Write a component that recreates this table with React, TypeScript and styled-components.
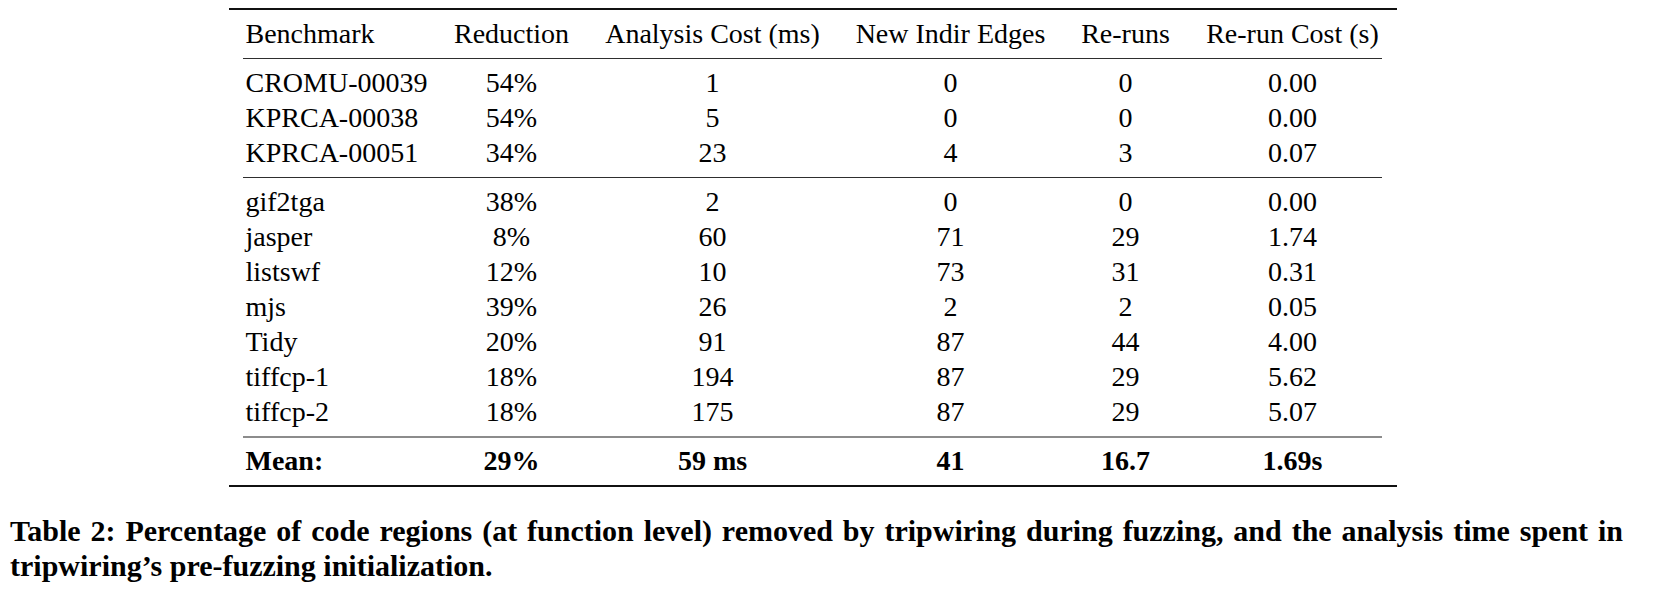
import React from 'react';
import styled, { createGlobalStyle } from 'styled-components';

const GlobalStyle = createGlobalStyle`
  html, body {
    margin: 0;
    padding: 0;
    background: #ffffff;
  }
  body {
    font-family: 'Liberation Serif', 'Times New Roman', serif;
    color: #000000;
  }
`;

const columns = [
  { key: 'name', label: 'Benchmark', width: 207 },
  { key: 'reduction', label: 'Reduction', width: 151 },
  { key: 'cost', label: 'Analysis Cost (ms)', width: 251 },
  { key: 'edges', label: 'New Indir Edges', width: 225 },
  { key: 'reruns', label: 'Re-runs', width: 125 },
  { key: 'rerunCost', label: 'Re-run Cost (s)', width: 209 },
];

type Row = [string, string, string, string, string, string];

const cgcRows: Row[] = [
  ['CROMU-00039', '54%', '1', '0', '0', '0.00'],
  ['KPRCA-00038', '54%', '5', '0', '0', '0.00'],
  ['KPRCA-00051', '34%', '23', '4', '3', '0.07'],
];

const realRows: Row[] = [
  ['gif2tga', '38%', '2', '0', '0', '0.00'],
  ['jasper', '8%', '60', '71', '29', '1.74'],
  ['listswf', '12%', '10', '73', '31', '0.31'],
  ['mjs', '39%', '26', '2', '2', '0.05'],
  ['Tidy', '20%', '91', '87', '44', '4.00'],
  ['tiffcp-1', '18%', '194', '87', '29', '5.62'],
  ['tiffcp-2', '18%', '175', '87', '29', '5.07'],
];

const meanRow: Row = ['Mean:', '29%', '59 ms', '41', '16.7', '1.69s'];

const Page = styled.div`
  width: 1656px;
  padding-top: 8px;
`;

const Figure = styled.figure`
  margin: 0;
  width: 1626px;
`;

const Table = styled.table`
  margin: 0 auto;
  width: 1168px;
  border-collapse: collapse;
  table-layout: fixed;
  font-size: 28px;
`;

const Col = styled.col<{ $w: number }>`
  width: ${(p) => p.$w}px;
`;

const Cell = styled.td<{ $first?: boolean; $bold?: boolean }>`
  height: 35px;
  padding: 0 0 0 ${(p) => (p.$first ? '16.5px' : '0')};
  line-height: 35px;
  white-space: nowrap;
  text-align: ${(p) => (p.$first ? 'left' : 'center')};
  font-weight: ${(p) => (p.$bold ? 700 : 400)};
  vertical-align: top;
`;

const RuleCell = styled.td`
  padding: 0;
  line-height: 0;
`;

const Rule = styled.div<{ $kind: 'top' | 'mid' | 'soft' | 'bottom' }>`
  height: ${(p) => (p.$kind === 'mid' ? '1px' : '2px')};
  background: ${(p) => (p.$kind === 'soft' ? '#8c8c8c' : p.$kind === 'mid' ? '#2e2e2e' : '#111111')};
  margin: ${(p) => {
    if (p.$kind === 'top') return '0 0 6px 0';
    if (p.$kind === 'bottom') return '7px 0 0 0';
    if (p.$kind === 'soft') return '6.5px 15px 5.5px 14px';
    return '7px 15px 6px 14px';
  }};
`;

const Caption = styled.figcaption`
  margin: 26px 0 0 0;
  padding-left: 10px;
  width: 1613px;
  font-size: 30px;
  font-weight: 700;
  line-height: 35px;
`;

const JustifiedLine = styled.span`
  display: block;
  text-align: justify;
  text-align-last: justify;
  white-space: nowrap;
`;

const LastLine = styled.span`
  display: block;
`;

function RuleRow({ kind }: { kind: 'top' | 'mid' | 'soft' | 'bottom' }) {
  return (
    <tr>
      <RuleCell colSpan={6}>
        <Rule $kind={kind} />
      </RuleCell>
    </tr>
  );
}

function DataRow({ row, bold }: { row: Row; bold?: boolean }) {
  return (
    <tr>
      {row.map((v, i) => (
        <Cell key={columns[i].key} $first={i === 0} $bold={bold}>
          {v}
        </Cell>
      ))}
    </tr>
  );
}

export default function App() {
  return (
    <Page>
      <GlobalStyle />
      <Figure>
        <Table>
          <colgroup>
            {columns.map((c) => (
              <Col key={c.key} $w={c.width} />
            ))}
          </colgroup>
          <tbody>
            <RuleRow kind="top" />
            <DataRow row={columns.map((c) => c.label) as Row} />
            <RuleRow kind="mid" />
            {cgcRows.map((r) => (
              <DataRow key={r[0]} row={r} />
            ))}
            <RuleRow kind="mid" />
            {realRows.map((r) => (
              <DataRow key={r[0]} row={r} />
            ))}
            <RuleRow kind="soft" />
            <DataRow row={meanRow} bold />
            <RuleRow kind="bottom" />
          </tbody>
        </Table>
        <Caption>
          <JustifiedLine>
            Table 2: Percentage of code regions (at function level) removed by tripwiring during fuzzing, and the
            analysis time spent in
          </JustifiedLine>
          <LastLine>tripwiring’s pre-fuzzing initialization.</LastLine>
        </Caption>
      </Figure>
    </Page>
  );
}
